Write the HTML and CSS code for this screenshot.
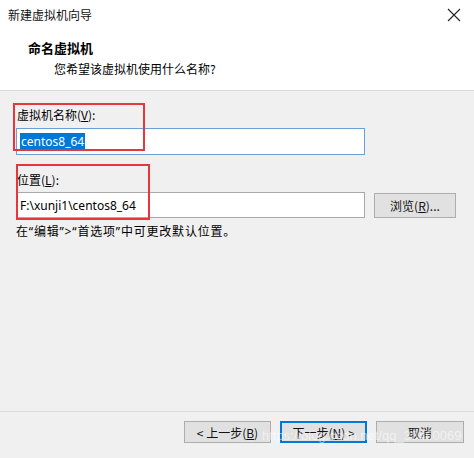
FILE: index.html
```html
<!DOCTYPE html>
<html lang="zh-CN">
<head>
<meta charset="utf-8">
<title>新建虚拟机向导</title>
<link rel="stylesheet" href="styles.css">
</head>
<body>
<div class="window">
  <div class="titlebar">
    <span class="title">新建虚拟机向导</span>
    <svg class="close" width="14" height="14" viewBox="0 0 14 14"><path d="M1 1 L13 13 M13 1 L1 13" stroke="#222" stroke-width="1.1" fill="none"/></svg>
  </div>
  <div class="header">
    <div class="h-title">命名虚拟机</div>
    <div class="h-sub">您希望该虚拟机使用什么名称?</div>
  </div>
  <div class="content">
    <div class="label label-name">虚拟机名称(<u>V</u>):</div>
    <div class="input focused"><span class="sel">centos8_64</span></div>
    <div class="label label-loc">位置(<u>L</u>):</div>
    <div class="row">
      <div class="input loc">F:\xunji1\centos8_64</div>
      <div class="btn browse">浏览(<u>R</u>)...</div>
    </div>
    <div class="hint">在“编辑”&gt;“首选项”中可更改默认位置。</div>
    <div class="mark mark1"></div>
    <div class="mark mark2"></div>
  </div>
  <div class="footer">
    <div class="btn">&lt; 上一步(<u>B</u>)</div>
    <div class="btn default">下一步(<u>N</u>) &gt;</div>
    <div class="btn cancel">取消</div>
    <div class="watermark">https://blog.csdn.net/qq_38460069</div>
  </div>
</div>
</body>
</html>
```
FILE: styles.css
```css
html, body {
  margin: 0;
  padding: 0;
}
body {
  width: 474px;
  height: 458px;
  overflow: hidden;
  background: #f0f0f0;
  font-family: "Noto Sans CJK SC", "Microsoft YaHei", sans-serif;
  font-size: 12px;
  color: #000;
}
.window {
  display: flex;
  flex-direction: column;
  height: 458px;
}
.titlebar {
  height: 30px;
  background: #fff;
  display: flex;
  align-items: center;
  justify-content: space-between;
  padding: 0 13px 0 8px;
  flex: none;
}
.title {
  font-size: 12px;
  line-height: 16px;
  color: #111;
}
.close {
  display: block;
}
.header {
  background: #fff;
  height: 60px;
  border-bottom: 1px solid #d9d9d9;
  flex: none;
  padding-left: 28px;
}
.h-title {
  font-weight: bold;
  font-size: 13px;
  line-height: 16px;
  margin-top: 10px;
}
.h-sub {
  font-size: 12px;
  line-height: 16px;
  margin-top: 5px;
  padding-left: 26px;
}
.content {
  position: relative;
  padding: 0 18px 0 16px;
  flex: 1;
}
.label {
  line-height: 16px;
  padding-left: 1px;
}
.label-name {
  margin-top: 16px;
}
.label-loc {
  margin-top: 17px;
}
.input {
  background: #fff;
  border: 1px solid #a9a9a9;
  box-sizing: border-box;
  height: 26px;
  display: flex;
  align-items: center;
  padding-left: 3px;
  font-family: "Noto Sans", "Liberation Sans", sans-serif;
  font-size: 12px;
}
.input.focused {
  width: 349px;
  height: 27px;
  margin-top: 5px;
  border-color: #6a9fd8;
}
.sel {
  background: #0078d7;
  color: #fff;
  line-height: 18px;
  padding: 0 1px;
}
.row {
  display: flex;
  align-items: center;
  gap: 9px;
  margin-top: 4px;
}
.input.loc {
  width: 349px;
}
.btn {
  box-sizing: border-box;
  height: 22px;
  width: 87px;
  background: #e1e1e1;
  border: 1px solid #adadad;
  display: flex;
  align-items: center;
  justify-content: center;
  font-size: 12px;
  color: #111;
}
.browse {
  width: 82px;
  height: 25px;
}
.hint {
  margin-top: 6px;
  line-height: 16px;
  font-family: "Noto Sans", "Noto Sans CJK SC", sans-serif;
  letter-spacing: 0.8px;
}
.mark {
  position: absolute;
  border: 2px solid #e8373c;
  box-sizing: border-box;
}
.mark1 {
  left: 13px;
  top: 12px;
  width: 132px;
  height: 48px;
}
.mark2 {
  left: 16px;
  top: 73px;
  width: 134px;
  height: 56px;
}
.footer {
  position: relative;
  flex: none;
  height: 40px;
  border-top: 1px solid #dadada;
  display: flex;
  justify-content: flex-end;
  align-items: center;
  gap: 9px;
  padding: 0 10px 6px 0;
}
.btn.default {
  border: 2px solid #0078d7;
}
.btn.cancel {
  width: 88px;
}
.watermark {
  position: absolute;
  left: 262px;
  top: 16px;
  font-family: "Liberation Sans", Arial, sans-serif;
  font-size: 13px;
  color: rgba(255, 255, 255, 0.55);
  white-space: nowrap;
}
```
